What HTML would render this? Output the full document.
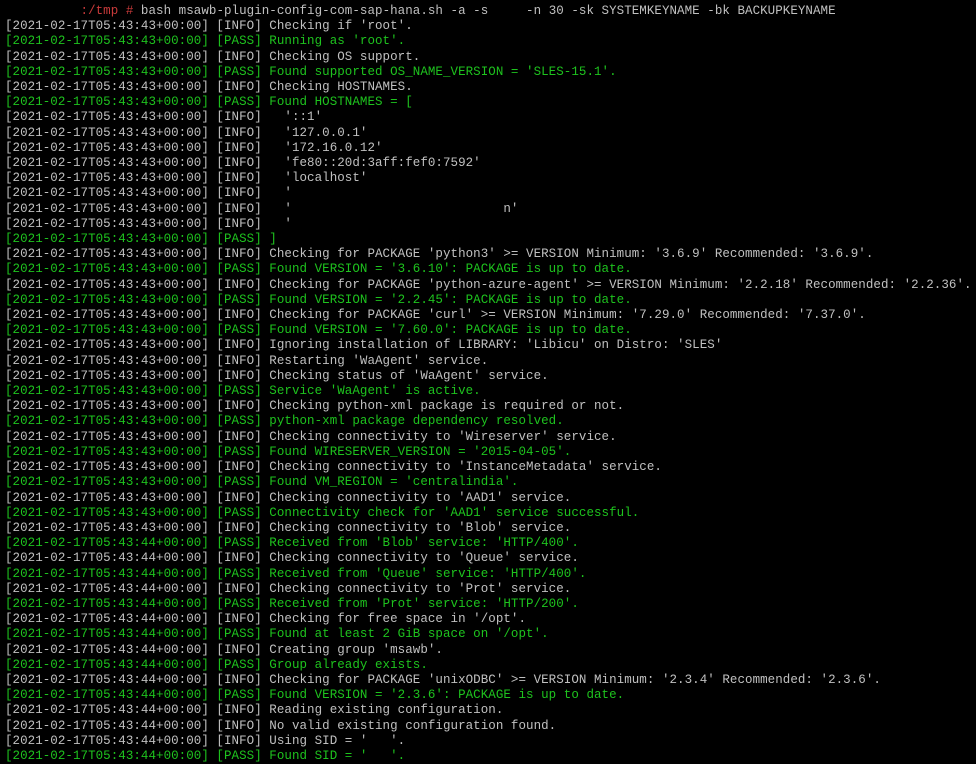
<html><head><style>
body{margin:0;background:#000;width:976px;height:763px;overflow:hidden}
pre{margin:0;padding:4px 0 0 5px;font-family:"Liberation Mono",monospace;font-size:12.5px;line-height:15.2px;color:#c0c0c0;letter-spacing:0.05px}
.g{color:#1ec31e}.r{color:#c83a3a}
</style></head><body><pre>          <span class="r">:/tmp #</span> bash msawb-plugin-config-com-sap-hana.sh -a -s     -n 30 -sk SYSTEMKEYNAME -bk BACKUPKEYNAME
[2021-02-17T05:43:43+00:00] [INFO] Checking if 'root'.
<span class="g">[2021-02-17T05:43:43+00:00] [PASS] Running as 'root'.</span>
[2021-02-17T05:43:43+00:00] [INFO] Checking OS support.
<span class="g">[2021-02-17T05:43:43+00:00] [PASS] Found supported OS_NAME_VERSION = 'SLES-15.1'.</span>
[2021-02-17T05:43:43+00:00] [INFO] Checking HOSTNAMES.
<span class="g">[2021-02-17T05:43:43+00:00] [PASS] Found HOSTNAMES = [</span>
[2021-02-17T05:43:43+00:00] [INFO]   '::1'
[2021-02-17T05:43:43+00:00] [INFO]   '127.0.0.1'
[2021-02-17T05:43:43+00:00] [INFO]   '172.16.0.12'
[2021-02-17T05:43:43+00:00] [INFO]   'fe80::20d:3aff:fef0:7592'
[2021-02-17T05:43:43+00:00] [INFO]   'localhost'
[2021-02-17T05:43:43+00:00] [INFO]   '
[2021-02-17T05:43:43+00:00] [INFO]   '                            n'
[2021-02-17T05:43:43+00:00] [INFO]   '
<span class="g">[2021-02-17T05:43:43+00:00] [PASS] ]</span>
[2021-02-17T05:43:43+00:00] [INFO] Checking for PACKAGE 'python3' >= VERSION Minimum: '3.6.9' Recommended: '3.6.9'.
<span class="g">[2021-02-17T05:43:43+00:00] [PASS] Found VERSION = '3.6.10': PACKAGE is up to date.</span>
[2021-02-17T05:43:43+00:00] [INFO] Checking for PACKAGE 'python-azure-agent' >= VERSION Minimum: '2.2.18' Recommended: '2.2.36'.
<span class="g">[2021-02-17T05:43:43+00:00] [PASS] Found VERSION = '2.2.45': PACKAGE is up to date.</span>
[2021-02-17T05:43:43+00:00] [INFO] Checking for PACKAGE 'curl' >= VERSION Minimum: '7.29.0' Recommended: '7.37.0'.
<span class="g">[2021-02-17T05:43:43+00:00] [PASS] Found VERSION = '7.60.0': PACKAGE is up to date.</span>
[2021-02-17T05:43:43+00:00] [INFO] Ignoring installation of LIBRARY: 'Libicu' on Distro: 'SLES'
[2021-02-17T05:43:43+00:00] [INFO] Restarting 'WaAgent' service.
[2021-02-17T05:43:43+00:00] [INFO] Checking status of 'WaAgent' service.
<span class="g">[2021-02-17T05:43:43+00:00] [PASS] Service 'WaAgent' is active.</span>
[2021-02-17T05:43:43+00:00] [INFO] Checking python-xml package is required or not.
<span class="g">[2021-02-17T05:43:43+00:00] [PASS] python-xml package dependency resolved.</span>
[2021-02-17T05:43:43+00:00] [INFO] Checking connectivity to 'Wireserver' service.
<span class="g">[2021-02-17T05:43:43+00:00] [PASS] Found WIRESERVER_VERSION = '2015-04-05'.</span>
[2021-02-17T05:43:43+00:00] [INFO] Checking connectivity to 'InstanceMetadata' service.
<span class="g">[2021-02-17T05:43:43+00:00] [PASS] Found VM_REGION = 'centralindia'.</span>
[2021-02-17T05:43:43+00:00] [INFO] Checking connectivity to 'AAD1' service.
<span class="g">[2021-02-17T05:43:43+00:00] [PASS] Connectivity check for 'AAD1' service successful.</span>
[2021-02-17T05:43:43+00:00] [INFO] Checking connectivity to 'Blob' service.
<span class="g">[2021-02-17T05:43:44+00:00] [PASS] Received from 'Blob' service: 'HTTP/400'.</span>
[2021-02-17T05:43:44+00:00] [INFO] Checking connectivity to 'Queue' service.
<span class="g">[2021-02-17T05:43:44+00:00] [PASS] Received from 'Queue' service: 'HTTP/400'.</span>
[2021-02-17T05:43:44+00:00] [INFO] Checking connectivity to 'Prot' service.
<span class="g">[2021-02-17T05:43:44+00:00] [PASS] Received from 'Prot' service: 'HTTP/200'.</span>
[2021-02-17T05:43:44+00:00] [INFO] Checking for free space in '/opt'.
<span class="g">[2021-02-17T05:43:44+00:00] [PASS] Found at least 2 GiB space on '/opt'.</span>
[2021-02-17T05:43:44+00:00] [INFO] Creating group 'msawb'.
<span class="g">[2021-02-17T05:43:44+00:00] [PASS] Group already exists.</span>
[2021-02-17T05:43:44+00:00] [INFO] Checking for PACKAGE 'unixODBC' >= VERSION Minimum: '2.3.4' Recommended: '2.3.6'.
<span class="g">[2021-02-17T05:43:44+00:00] [PASS] Found VERSION = '2.3.6': PACKAGE is up to date.</span>
[2021-02-17T05:43:44+00:00] [INFO] Reading existing configuration.
[2021-02-17T05:43:44+00:00] [INFO] No valid existing configuration found.
[2021-02-17T05:43:44+00:00] [INFO] Using SID = '   '.
<span class="g">[2021-02-17T05:43:44+00:00] [PASS] Found SID = '   '.</span></pre></body></html>
